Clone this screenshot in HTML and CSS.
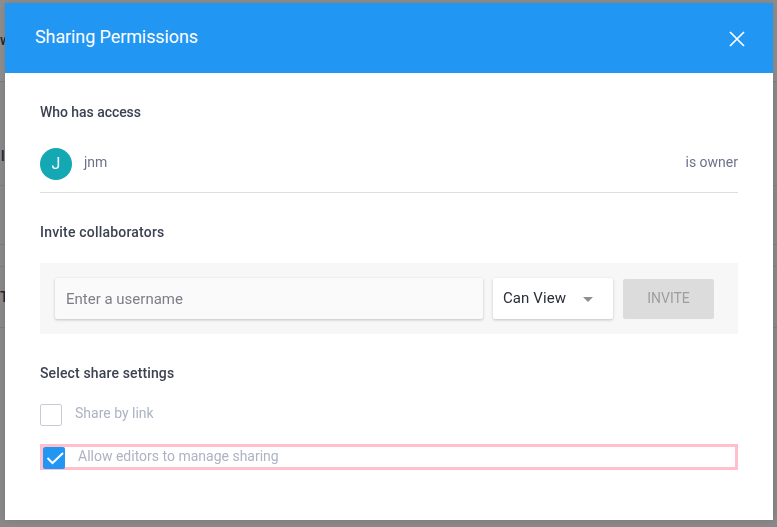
FILE: index.html
```html
<!DOCTYPE html>
<html lang="en">
<head>
<meta charset="utf-8">
<title>Sharing Permissions</title>
<link rel="stylesheet" href="styles.css">
</head>
<body>
<div class="page">
  <div class="bg-row bg-h1"><span class="bg-text">w</span></div>
  <div class="bg-row bg-h2"><span class="bg-text">l</span></div>
  <div class="bg-row bg-h3"></div>
  <div class="bg-row bg-h3b"></div>
  <div class="bg-row bg-h4"><span class="bg-text">T</span></div>
  <div class="bg-row bg-h5"></div>
</div>
<div class="backdrop"></div>
<div class="modal">
  <header class="modal-head">
    <h1 class="modal-title">Sharing Permissions</h1>
    <svg class="close" width="16" height="16" viewBox="0 0 16 16" aria-label="Close"><path d="M1 1 15 15M15 1 1 15" stroke="#fff" stroke-width="1.7" fill="none"/></svg>
  </header>
  <div class="modal-body">
    <h2 class="section-title first">Who has access</h2>
    <div class="owner-row">
      <div class="avatar">J</div>
      <span class="user-name">jnm</span>
      <span class="owner-label">is owner</span>
    </div>
    <h2 class="section-title invite-title">Invite collaborators</h2>
    <div class="invite-panel">
      <div class="field input-field">Enter a username</div>
      <div class="field select-field"><span>Can View</span><span class="caret"></span></div>
      <div class="invite-btn">INVITE</div>
    </div>
    <h2 class="section-title settings-title">Select share settings</h2>
    <div class="check-row">
      <span class="check-box"></span>
      <span class="check-label">Share by link</span>
    </div>
    <div class="check-row focused">
      <span class="check-box checked"><svg width="22" height="22" viewBox="0 0 22 22"><path d="M4.5 11 9.5 16 20 6" stroke="#fff" stroke-width="2" fill="none"/></svg></span>
      <span class="check-label">Allow editors to manage sharing</span>
    </div>
  </div>
</div>
</body>
</html>
```

FILE: styles.css
```css
* { box-sizing: border-box; }
html, body { margin: 0; height: 100%; overflow: hidden; }
body { font-family: Roboto, "Liberation Sans", sans-serif; background: #fff; color: #3d4253; }

.page { display: flex; flex-direction: column; height: 527px; background: #f8f8f8; }
.bg-row { border-bottom: 1px solid #e4e4e4; display: flex; align-items: center; overflow: hidden; }
.bg-h1 { height: 82px; background: #fff; padding-bottom: 2px; }
.bg-h2 { height: 104px; align-items: flex-start; padding-top: 66px; padding-left: 1px; }
.bg-h3 { height: 59px; }
.bg-h3b { height: 22px; }
.bg-h4 { height: 61px; }
.bg-h5 { flex: 1; border-bottom: 0; }
.bg-text { font-size: 14px; font-weight: 500; color: #3d4253; white-space: nowrap; }

.backdrop { position: fixed; inset: 0; background: rgba(0, 0, 0, .45); }

.modal { position: fixed; left: 5px; top: 3px; width: 768px; height: 517px; background: #fff; box-shadow: 0 0 6px rgba(0,0,0,.12); }
.modal-head { height: 70px; background: #2196f3; padding: 0 28px 0 30px; display: flex; align-items: center; justify-content: space-between; }
.modal-title { margin: 0 0 3px; font-size: 18px; font-weight: 400; color: #fff; line-height: 24px; letter-spacing: -.1px; }
.close { margin-top: 2px; }

.modal-body { padding: 0 35px; }
.section-title { margin: 0; font-size: 14px; font-weight: 500; line-height: 18px; color: #3d4253; }
.first { padding-top: 30px; letter-spacing: -.05px; }
.owner-row { margin-top: 27px; height: 45px; padding-bottom: 12px; border-bottom: 1px solid #dedede; display: flex; align-items: flex-start; }
.avatar { width: 32px; height: 32px; border-radius: 50%; background: #14a8b5; color: #fff; font-size: 16px; line-height: 32px; text-align: center; }
.user-name { margin-left: 12px; font-size: 14px; line-height: 28px; color: #6c7389; }
.owner-label { margin-left: auto; font-size: 14px; line-height: 28px; color: #6c7389; }
.invite-title { margin-top: 30px; letter-spacing: .2px; }

.invite-panel { margin-top: 22px; height: 71px; background: #f7f7f7; padding: 15px 24px 15px 15px; display: flex; gap: 10px; align-items: flex-start; }
.field { height: 41px; border-radius: 2px; box-shadow: 0 1px 3px rgba(0,0,0,.22); font-size: 15px; display: flex; align-items: center; }
.input-field { flex: 0 0 428px; background: #fafafa; padding-left: 11px; color: #7e7e86; }
.select-field { flex: 0 0 120px; background: #fff; padding: 0 20px 2px 10px; color: #2a2e38; justify-content: space-between; letter-spacing: .1px; }
.caret { width: 0; height: 0; margin-top: 4px; border-left: 5px solid transparent; border-right: 5px solid transparent; border-top: 5px solid #8f8f8f; }
.invite-btn { flex: 0 0 91px; margin-top: 1px; height: 40px; border-radius: 2px; background: #dcdcdc; color: #a09d9d; font-size: 14px; line-height: 38px; text-align: center; }

.settings-title { margin-top: 30px; letter-spacing: .14px; }
.check-row { display: flex; align-items: flex-start; font-size: 14px; color: #aeb2c3; }
.check-row:not(.focused) { margin-top: 22px; height: 22px; }
.check-box { flex: none; width: 22px; height: 22px; border: 1px solid #c9cbd6; border-radius: 2px; background: #fff; }
.check-box.checked { background: #2196f3; border: 0; }
.check-box svg { display: block; }
.check-label { margin-left: 13px; line-height: 18px; }
.focused { margin-top: 18px; height: 26px; border: 3px solid #ffc0cb; }
```
